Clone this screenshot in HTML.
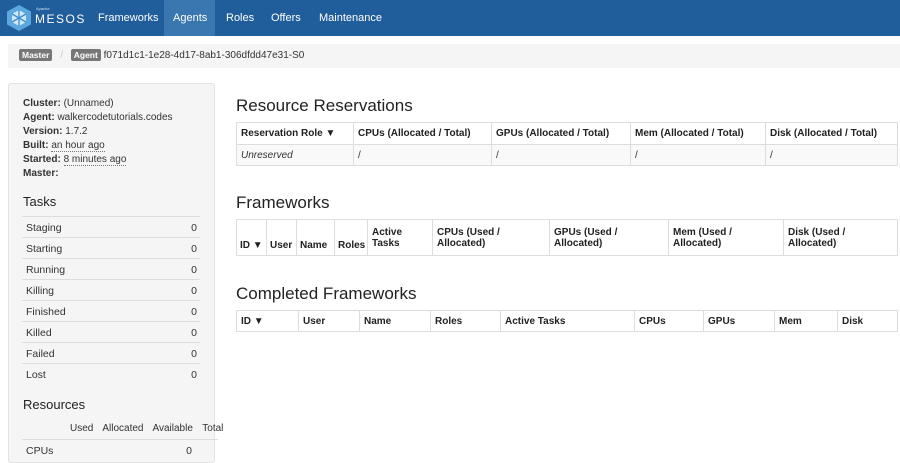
<!DOCTYPE html>
<html><head><meta charset="utf-8"><style>
*{box-sizing:border-box;margin:0;padding:0}
body{width:900px;height:458px;overflow:hidden;background:#fff;font-family:"Liberation Sans",Arial,sans-serif;color:#333;font-size:10.5px;position:relative}
.a{position:absolute}
.nav{left:0;top:0;width:900px;height:36px;background:#1f5d9b}
.nav span{position:absolute;top:12px;color:#fff;font-size:11px}
.bc{left:8px;top:44px;width:892px;height:24px;background:#f5f5f5}
.lbl{background:#777;color:#fff;font-size:8.5px;padding:1px 3px;border-radius:2px;font-weight:bold}
.side{left:8px;top:83px;width:207px;height:380px;background:#f5f5f5;border:1px solid #e3e3e3;border-radius:3px}
h2{position:absolute;font-weight:normal;font-size:17px;color:#222}
h3{position:absolute;font-weight:normal;font-size:13px;color:#222}
.row{position:absolute;left:22px;width:178px;height:21px;border-top:1px solid #ddd;font-size:10.5px}
.row b{position:absolute;left:4px;top:5px;font-weight:normal}
.row i{position:absolute;right:3px;top:5px;font-style:normal}
table{position:absolute;border-collapse:collapse;font-size:10px;left:236px;width:662px;table-layout:fixed}
td,th{border:1px solid #ddd;padding:0 4px;text-align:left;vertical-align:middle}
th{font-weight:bold;color:#222}
.nw{white-space:nowrap}
.dot{border-bottom:1px dotted #777}
</style></head><body>
<div class="a nav">
<svg class="a" style="left:6px;top:4px" width="26" height="28" viewBox="0 0 26 28"><polygon points="13,1 25,7.5 25,20.5 13,27 1,20.5 1,7.5" fill="#5aa8de"/><polygon points="13,6 20,10 20,18 13,22 6,18 6,10" fill="#cfe8f7"/><path d="M6 10L20 18M20 10L6 18M13 6V22" stroke="#3f8ccc" stroke-width="1.3"/></svg>
<div class="a" style="left:36px;top:6px;color:#cfe0f0;font-size:4px">Apache</div>
<div class="a" style="left:35px;top:12px;color:#fff;font-size:12px;letter-spacing:1.5px">MESOS</div>
<div class="a" style="left:164px;top:0;width:51px;height:36px;background:#3a76af"></div>
<span style="left:98px">Frameworks</span><span style="left:173px">Agents</span><span style="left:226px">Roles</span><span style="left:271px">Offers</span><span style="left:319px">Maintenance</span>
</div>
<div class="a bc"></div>
<div class="a" style="left:19px;top:50px;font-size:10px"><span class="lbl">Master</span> <span style="color:#ccc;margin:0 5px">/</span> <span class="lbl">Agent</span> f071d1c1-1e28-4d17-8ab1-306dfdd47e31-S0</div>
<div class="a side"></div>
<div class="a" style="left:23px;top:97px;line-height:14px;font-size:10px">
<b>Cluster:</b> (Unnamed)<br><b>Agent:</b> walkercodetutorials.codes<br><b>Version:</b> 1.7.2<br><b>Built:</b> <span class="dot">an hour ago</span><br><b>Started:</b> <span class="dot">8 minutes ago</span><br><b>Master:</b></div>
<h3 style="left:23px;top:194px">Tasks</h3>
<div class="row" style="top:216px"><b>Staging</b><i>0</i></div>
<div class="row" style="top:237px"><b>Starting</b><i>0</i></div>
<div class="row" style="top:258px"><b>Running</b><i>0</i></div>
<div class="row" style="top:279px"><b>Killing</b><i>0</i></div>
<div class="row" style="top:300px"><b>Finished</b><i>0</i></div>
<div class="row" style="top:321px"><b>Killed</b><i>0</i></div>
<div class="row" style="top:342px"><b>Failed</b><i>0</i></div>
<div class="row" style="top:363px"><b>Lost</b><i>0</i></div>
<h3 style="left:23px;top:397px">Resources</h3>
<div class="a" style="left:70px;top:423px;font-size:10px;word-spacing:2px">Used&nbsp; Allocated&nbsp; Available&nbsp; Total</div>
<div class="row" style="top:439px;width:196px"><b>CPUs</b><i style="right:26px">0</i></div>
<h2 style="left:236px;top:96px">Resource Reservations</h2>
<table style="top:122px"><tr style="height:22px"><th style="width:117px">Reservation Role ▼</th><th style="width:138px">CPUs (Allocated / Total)</th><th style="width:139px">GPUs (Allocated / Total)</th><th style="width:135px">Mem (Allocated / Total)</th><th>Disk (Allocated / Total)</th></tr>
<tr style="height:21px;background:#f9f9f9"><td><i>Unreserved</i></td><td>/</td><td>/</td><td>/</td><td>/</td></tr></table>
<h2 style="left:236px;top:193px">Frameworks</h2>
<table style="top:219px"><tr style="height:36px"><th class="nw" style="width:30px;padding:16px 3px 0">ID ▼</th><th style="width:30px;padding:16px 3px 0">User</th><th style="width:38px;padding:16px 3px 0">Name</th><th style="width:33px;padding:16px 3px 0">Roles</th><th style="width:65px">Active Tasks</th><th style="width:117px">CPUs (Used / Allocated)</th><th style="width:119px">GPUs (Used / Allocated)</th><th style="width:115px">Mem (Used / Allocated)</th><th>Disk (Used / Allocated)</th></tr></table>
<h2 style="left:236px;top:284px">Completed Frameworks</h2>
<table style="top:310px"><tr style="height:21px"><th style="width:62px">ID ▼</th><th style="width:61px">User</th><th style="width:71px">Name</th><th style="width:70px">Roles</th><th style="width:134px">Active Tasks</th><th style="width:69px">CPUs</th><th style="width:71px">GPUs</th><th style="width:63px">Mem</th><th>Disk</th></tr></table>
</body></html>
